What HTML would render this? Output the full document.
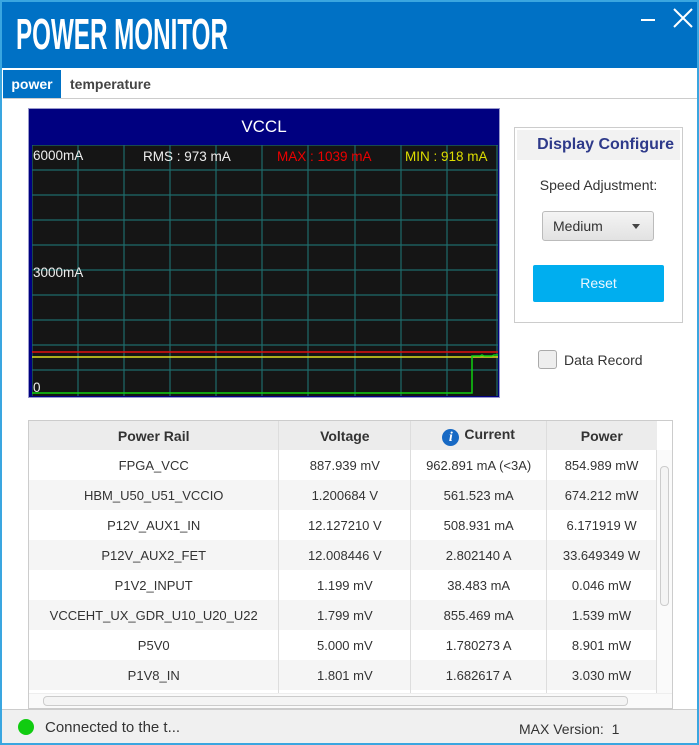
<!DOCTYPE html>
<html><head><style>
*{margin:0;padding:0;box-sizing:border-box}
body{width:699px;height:745px;overflow:hidden;background:#fff;font-family:"Liberation Sans",sans-serif;position:relative}
.abs{position:absolute}
#win{position:absolute;left:0;top:0;width:699px;height:745px;border:2px solid #3aa6e0}
.title{left:0;top:0;width:699px;height:68px;background:#0071c5}
.tt{left:16px;top:10px;color:#fff;font-size:44px;font-weight:bold;transform:scaleX(0.55);transform-origin:left;white-space:nowrap}
table{border-collapse:collapse;font-size:13px;color:#333}
td,th{text-align:center;height:30px;border-right:1px solid #ddd;padding:0}
th{background:#ececec;font-size:14px;color:#333;height:29px}
tr:nth-child(odd) td{background:#f5f5f5}
</style></head><body>
<div class="abs title"></div>
<div class="abs tt">POWER MONITOR</div>
<div class="abs" style="left:641px;top:19px;width:14px;height:2px;background:#fff"></div>
<svg class="abs" style="left:672px;top:7px" width="22" height="22"><path d="M2 2L20 20M20 2L2 20" stroke="#fff" stroke-width="2"/></svg>
<div class="abs" style="left:3px;top:70px;width:58px;height:29px;background:#0071c5;color:#fff;font-weight:bold;font-size:14px;line-height:29px;text-align:center">power</div>
<div class="abs" style="left:70px;top:70px;height:29px;color:#444;font-weight:bold;font-size:14px;line-height:29px">temperature</div>
<div class="abs" style="left:3px;top:98px;width:694px;height:1px;background:#ccc"></div>
<div class="abs" style="left:28px;top:108px;width:472px;height:290px;background:#000080;border:1px solid #9999cc"></div>
<div class="abs" style="left:28px;top:117px;width:472px;text-align:center;color:#fff;font-size:17px">VCCL</div>
<svg class="abs" style="left:32px;top:145px" width="466" height="251">
<rect width="466" height="251" fill="#151515"/>
<g stroke="#1f6b6b" stroke-width="1.2">
<path d="M0 0V251M46 0V251M92 0V251M138 0V251M184 0V251M230 0V251M276 0V251M323 0V251M369 0V251M415 0V251M465 0V251"/>
<path d="M0 0H466M0 25H466M0 50H466M0 75H466M0 100H466M0 125H466M0 150H466M0 175H466M0 200H466M0 225H466"/>
</g>
<path d="M0 207H466" stroke="#e01010" stroke-width="1.5"/>
<path d="M0 212H466" stroke="#e0e020" stroke-width="1.5"/>
<path d="M0 248H440V211H448L450 210L452 211H460L462 210H466" stroke="#10d010" stroke-width="1.5" fill="none"/>
<g font-family="Liberation Sans" font-size="13.5">
<text x="1" y="15" fill="#eee">6000mA</text>
<text x="111" y="16" fill="#eee">RMS : 973 mA</text>
<text x="245" y="16" fill="#e00">MAX : 1039 mA</text>
<text x="373" y="16" fill="#dd0">MIN : 918 mA</text>
<text x="1" y="132" fill="#eee">3000mA</text>
<text x="1" y="247" fill="#eee">0</text>
</g></svg>
<div class="abs" style="left:514px;top:127px;width:169px;height:196px;border:1px solid #ccc"></div>
<div class="abs" style="left:517px;top:130px;width:163px;height:30px;background:#f2f2f2;color:#2e3a8a;font-weight:bold;font-size:16px;line-height:30px;text-align:right;padding-right:6px">Display Configure</div>
<div class="abs" style="left:514px;top:177px;width:169px;text-align:center;font-size:14px;color:#333">Speed Adjustment:</div>
<div class="abs" style="left:542px;top:211px;width:112px;height:30px;border:1px solid #bbb;border-radius:3px;background:linear-gradient(#f4f4f4,#e2e2e2);font-size:14px;color:#333;line-height:28px;padding-left:10px">Medium</div>
<div class="abs" style="left:632px;top:224px;border:4.5px solid transparent;border-top:5px solid #444"></div>
<div class="abs" style="left:533px;top:265px;width:131px;height:37px;background:#00aeef;border-radius:2px;color:#eaf6ff;font-size:14px;line-height:37px;text-align:center">Reset</div>
<div class="abs" style="left:538px;top:350px;width:19px;height:19px;border:1px solid #aaa;border-radius:3px;background:#eee"></div>
<div class="abs" style="left:564px;top:352px;font-size:14px;color:#333">Data Record</div>
<div class="abs" style="left:28px;top:420px;width:645px;height:289px;border:1px solid #ccc;overflow:hidden">
<table style="width:628px">
<tr><th style="width:250px">Power Rail</th><th style="width:132px">Voltage</th><th style="width:136px"><span style="display:inline-block;width:17px;height:17px;border-radius:50%;background:#1769c4;color:#fff;font-style:italic;font-family:'Liberation Serif';font-size:14px;line-height:17px;vertical-align:-2px;margin-right:5px">i</span>Current</th><th style="width:110px;border-right:none">Power</th></tr>
<tr><td>FPGA_VCC</td><td>887.939 mV</td><td>962.891 mA (&lt;3A)</td><td>854.989 mW</td></tr>
<tr><td>HBM_U50_U51_VCCIO</td><td>1.200684 V</td><td>561.523 mA</td><td>674.212 mW</td></tr>
<tr><td>P12V_AUX1_IN</td><td>12.127210 V</td><td>508.931 mA</td><td>6.171919 W</td></tr>
<tr><td>P12V_AUX2_FET</td><td>12.008446 V</td><td>2.802140 A</td><td>33.649349 W</td></tr>
<tr><td>P1V2_INPUT</td><td>1.199 mV</td><td>38.483 mA</td><td>0.046 mW</td></tr>
<tr><td>VCCEHT_UX_GDR_U10_U20_U22</td><td>1.799 mV</td><td>855.469 mA</td><td>1.539 mW</td></tr>
<tr><td>P5V0</td><td>5.000 mV</td><td>1.780273 A</td><td>8.901 mW</td></tr>
<tr><td>P1V8_IN</td><td>1.801 mV</td><td>1.682617 A</td><td>3.030 mW</td></tr>
<tr><td></td><td></td><td></td><td></td></tr>
</table>
<div class="abs" style="left:628px;top:29px;width:16px;height:243px;background:#fafafa"></div>
<div class="abs" style="left:631px;top:45px;width:9px;height:140px;border:1px solid #ccc;border-radius:4px;background:#f4f4f4"></div>
<div class="abs" style="left:0;top:272px;width:645px;height:17px;background:#fafafa;border-top:1px solid #eee"></div>
<div class="abs" style="left:14px;top:275px;width:585px;height:10px;border:1px solid #ccc;border-radius:4px;background:#f4f4f4"></div>
</div>
<div class="abs" style="left:2px;top:709px;width:695px;height:34px;background:#f0f0f0;border-top:1px solid #ccc"></div>
<div class="abs" style="left:18px;top:719px;width:16px;height:16px;border-radius:50%;background:#11cc11"></div>
<div class="abs" style="left:45px;top:719px;font-size:15px;color:#333">Connected to the t...</div>
<div class="abs" style="left:519px;top:721px;font-size:14px;color:#333">MAX Version:&nbsp; 1</div>
<div id="win"></div>
</body></html>
